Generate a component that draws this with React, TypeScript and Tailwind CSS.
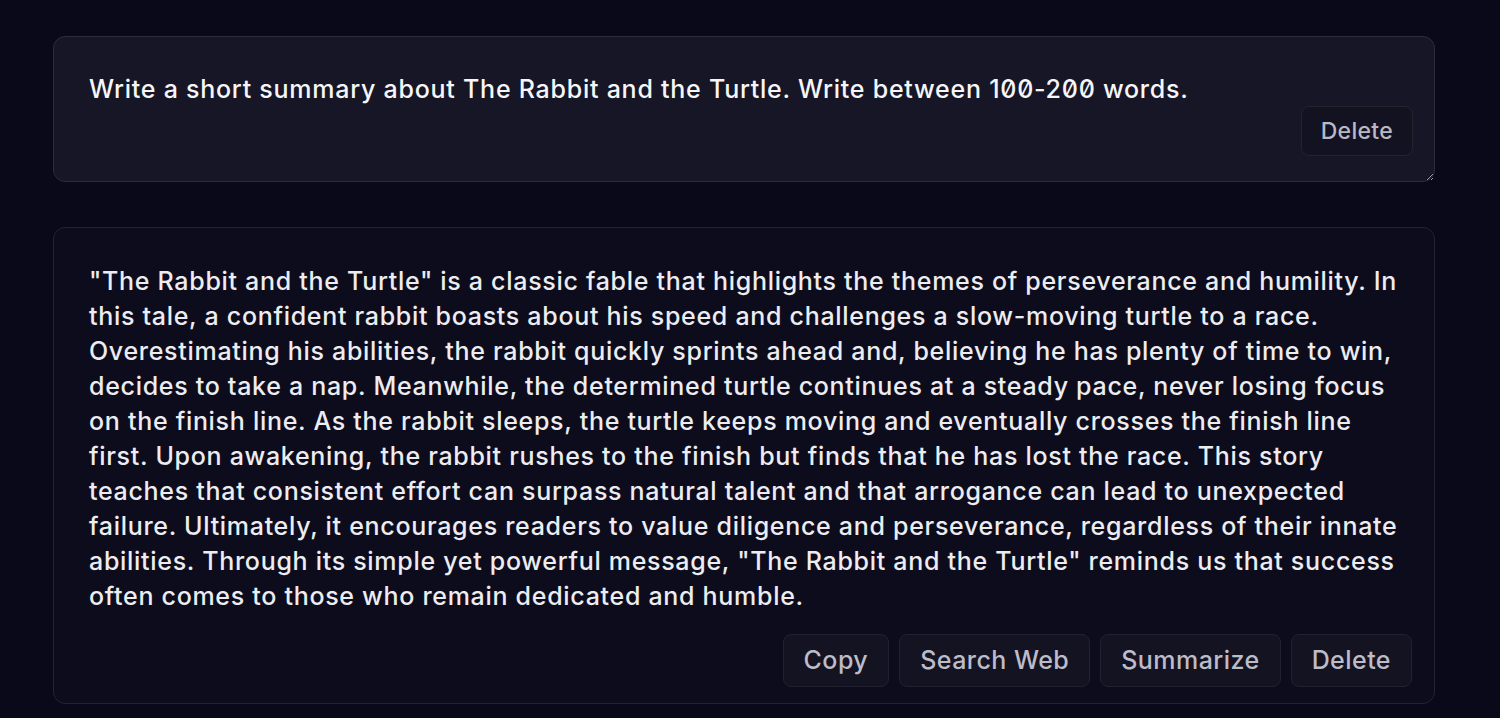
import React from "react";

const summary = `"The Rabbit and the Turtle" is a classic fable that highlights the themes of perseverance and humility. In this tale, a confident rabbit boasts about his speed and challenges a slow-moving turtle to a race. Overestimating his abilities, the rabbit quickly sprints ahead and, believing he has plenty of time to win, decides to take a nap. Meanwhile, the determined turtle continues at a steady pace, never losing focus on the finish line. As the rabbit sleeps, the turtle keeps moving and eventually crosses the finish line first. Upon awakening, the rabbit rushes to the finish but finds that he has lost the race. This story teaches that consistent effort can surpass natural talent and that arrogance can lead to unexpected failure. Ultimately, it encourages readers to value diligence and perseverance, regardless of their innate abilities. Through its simple yet powerful message, "The Rabbit and the Turtle" reminds us that success often comes to those who remain dedicated and humble.`;

function Btn({ label }: { label: string }) {
  return (
    <button className="h-[53px] px-[20px] rounded-[8px] border border-[#22212f] bg-[#141322] text-[#bdbcc9] text-[25px] font-medium tracking-[0.45px] leading-none">
      {label}
    </button>
  );
}

export default function App() {
  return (
    <div
      className="min-h-[718px] w-full bg-[#0a0919] px-[53px] pt-[36px] pb-[14px] flex flex-col gap-[45px]"
      style={{ fontFamily: "Inter, 'Noto Sans', sans-serif" }}
    >
      <div className="relative w-[1382px]">
        <textarea
          readOnly
          defaultValue="Write a short summary about The Rabbit and the Turtle. Write between 100-200 words."
          className="block w-full h-[146px] resize-y rounded-[12px] border border-[#2c2b40] bg-[#171627] text-[#f6f6f8] text-[25px] font-medium tracking-[0.75px] leading-[35px] pt-[35px] px-[35px] outline-none slashed-zero [color-scheme:dark]"
        />
        <button className="absolute right-[22px] top-[70px] h-[50px] px-[19px] rounded-[8px] border border-[#24232f] bg-[#131221] text-[#b9b8c6] text-[23px] font-medium tracking-[0.3px] leading-none">
          Delete
        </button>
      </div>

      <div className="w-[1382px] rounded-[12px] border border-[#242336] bg-[#0d0c1d] pt-[36px] pb-[16px] pl-[35px] pr-[22px]">
        <p className="text-[#ececf1] text-[25px] font-medium tracking-[0.7px] leading-[35px]">{summary}</p>
        <div className="mt-[20px] flex justify-end gap-[10px]">
          <Btn label="Copy" />
          <Btn label="Search Web" />
          <Btn label="Summarize" />
          <Btn label="Delete" />
        </div>
      </div>
    </div>
  );
}
